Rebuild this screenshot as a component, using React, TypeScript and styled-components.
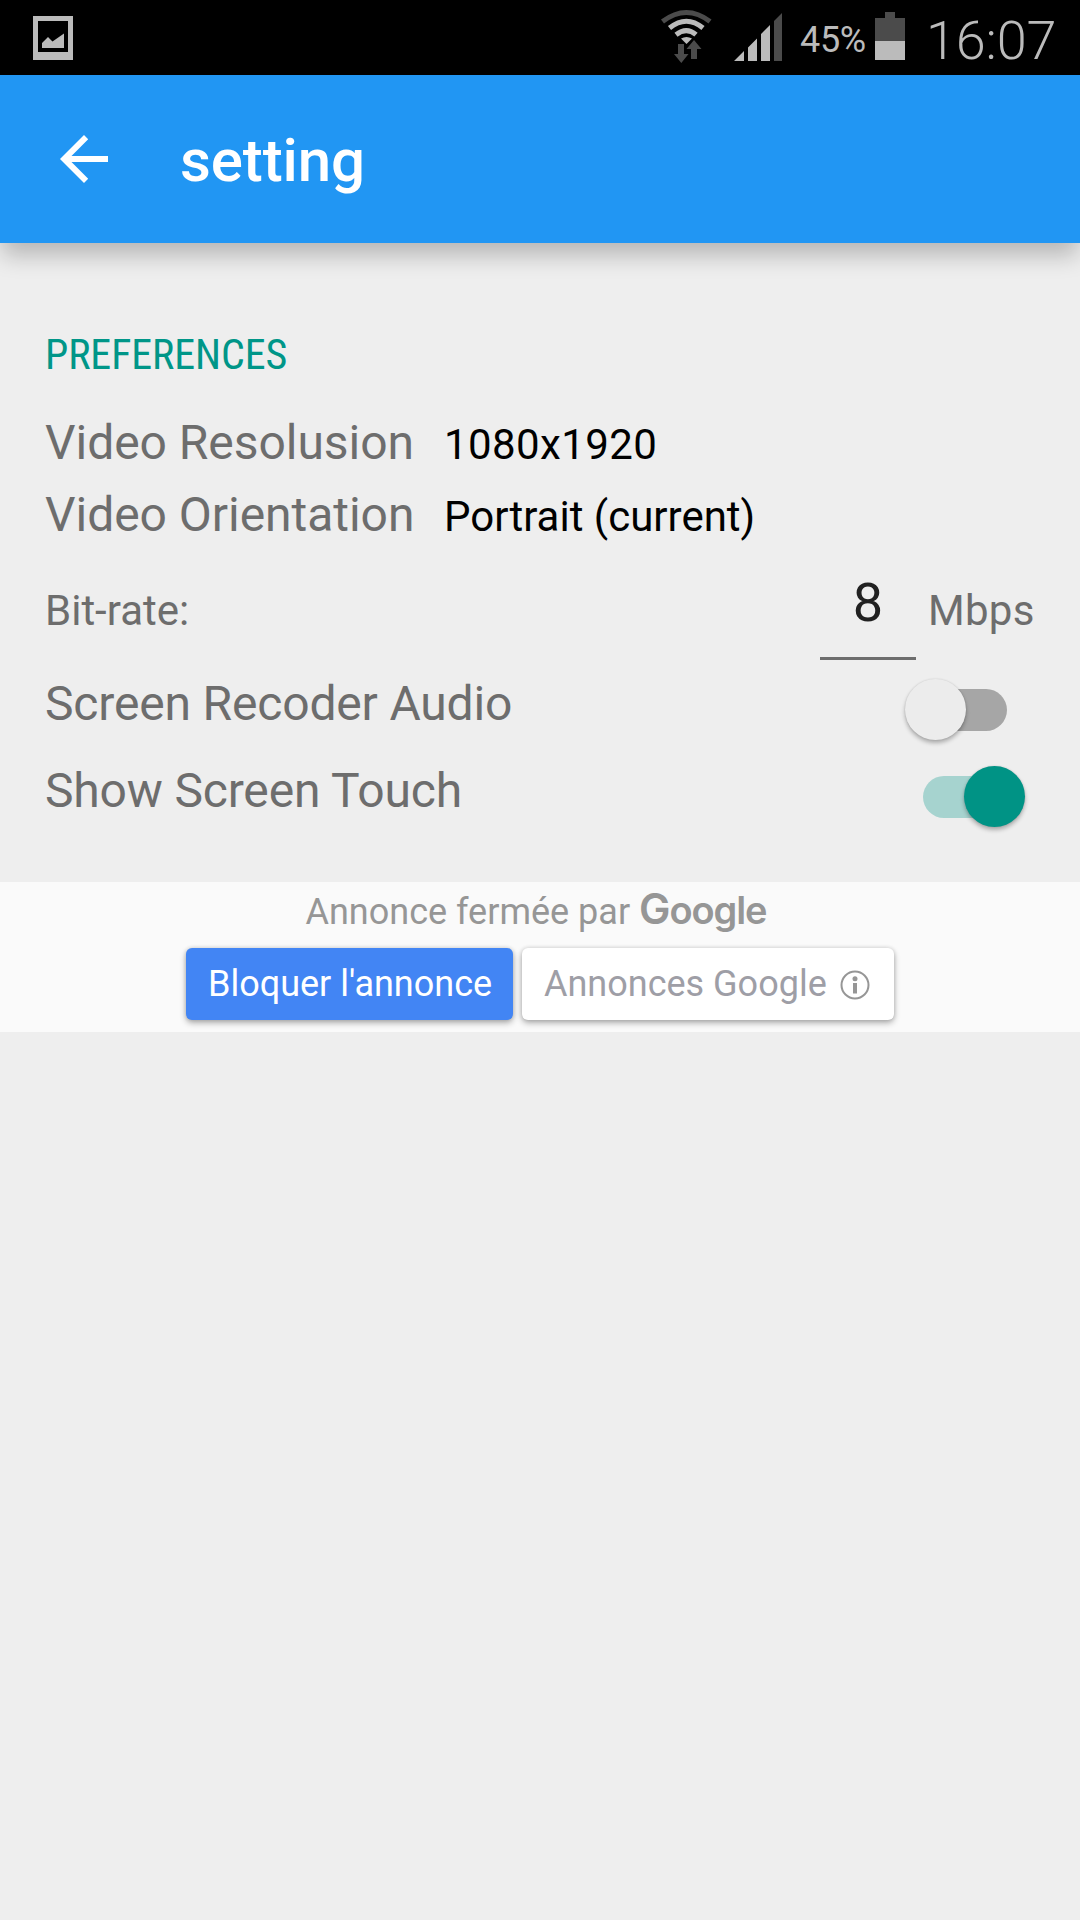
import React from "react";
import styled, { createGlobalStyle } from "styled-components";

const GlobalStyle = createGlobalStyle`
  body {
    margin: 0;
    background: #eeeeee;
    font-family: Roboto, "Noto Sans", sans-serif;
  }
`;

const Screen = styled.div`
  width: 1080px;
  height: 1920px;
  overflow: hidden;
  display: flex;
  flex-direction: column;
  background: #eeeeee;
  white-space: nowrap;
`;

const StatusBar = styled.header`
  display: flex;
  align-items: flex-start;
  height: 75px;
  flex: none;
  background: #000;
  color: #bbbbbb;
`;

const PictureIcon = styled.svg`
  margin: 16px auto 0 33px;
`;

const StatusIcons = styled.svg`
  margin-right: 14px;
`;

const BatteryText = styled.span`
  width: 74px;
  font-size: 36px;
  line-height: 80px;
  letter-spacing: -0.3px;
`;

const Clock = styled.span`
  width: 174px;
  padding-left: 20px;
  box-sizing: border-box;
  font-size: 54px;
  font-weight: 360;
  letter-spacing: -0.2px;
  line-height: 81px;
`;

const AppBar = styled.div`
  display: flex;
  align-items: center;
  height: 168px;
  flex: none;
  background: #2196f3;
  color: #fff;
  box-shadow: 0 14px 22px -2px rgba(0, 0, 0, 0.24);
`;

const BackIcon = styled.svg`
  margin: 0 72px 0 60px;
`;

const Title = styled.h1`
  margin: 0;
  padding-top: 3px;
  font-size: 60px;
  font-weight: 500;
  line-height: 70px;
  letter-spacing: -0.1px;
`;

const Preferences = styled.main`
  display: flex;
  flex-direction: column;
  padding: 87px 45px 48px;
  color: #6d6d6d;
`;

const SectionTitle = styled.h2`
  margin: 0 0 27px;
  color: #009688;
  font-family: "Roboto Condensed", Roboto, sans-serif;
  font-stretch: 75%;
  font-size: 42px;
  font-weight: 400;
  line-height: 50px;
  letter-spacing: -0.1px;
`;

const InfoRow = styled.div`
  display: flex;
  align-items: baseline;
  height: 72px;
  line-height: 72px;
`;

const Label = styled.span`
  font-size: 48px;
  letter-spacing: -0.17px;
`;

const InfoLabel = styled(Label)`
  width: 399px;
  letter-spacing: -0.04px;
`;

const Value = styled.span<{ $tracking?: string }>`
  color: #000;
  font-size: 42px;
  letter-spacing: ${(p) => p.$tracking ?? "normal"};
`;

const BitrateRow = styled.div`
  display: flex;
  height: 109px;
  font-size: 42px;
`;

const BitrateText = styled.span`
  padding-top: 5px;
  line-height: 109px;
`;

const BitrateUnit = styled(BitrateText)`
  width: 107px;
  letter-spacing: 0.3px;
`;

const BitrateField = styled.div`
  width: 96px;
  height: 106px;
  margin: 0 12px 0 auto;
  border-bottom: 3px solid #6d6d6d;
  color: #212121;
  font-size: 54px;
  line-height: 103px;
  text-align: center;
`;

const SwitchRow = styled.div`
  display: flex;
  justify-content: space-between;
  align-items: flex-start;
  height: 87px;
  line-height: 87px;
`;

const Track = styled.div<{ $on: boolean }>`
  position: relative;
  width: 84px;
  height: 42px;
  margin: 29px 28px 0 0;
  border-radius: 21px;
  background: ${(p) => (p.$on ? "#a6d3cf" : "#a6a6a6")};
`;

const Thumb = styled.div<{ $on: boolean }>`
  position: absolute;
  top: -10px;
  left: ${(p) => (p.$on ? "41px" : "-18px")};
  width: 61px;
  height: 61px;
  border-radius: 50%;
  background: ${(p) => (p.$on ? "#009385" : "#ececec")};
  box-shadow: 0 3px 4px rgba(0, 0, 0, 0.28), 0 0 2px rgba(0, 0, 0, 0.12);
`;

const AdPanel = styled.section`
  display: flex;
  flex-direction: column;
  align-items: center;
  height: 150px;
  background: #fafafa;
  font-size: 36px;
`;

const AdNotice = styled.div`
  display: flex;
  align-items: baseline;
  height: 66px;
  width: 469px;
  color: #969696;
  line-height: 54px;
`;

const Wordmark = styled.span`
  margin-left: 9px;
  font-family: Inter, sans-serif;
  font-size: 38px;
  font-weight: 600;
  letter-spacing: -1.1px;

  &::first-letter {
    font-size: 42px;
  }
`;

const AdActions = styled.div`
  display: flex;
  gap: 9px;
`;

const AdButton = styled.button<{ $primary?: boolean }>`
  display: flex;
  align-items: center;
  width: ${(p) => (p.$primary ? "327px" : "372px")};
  height: 72px;
  padding: 0 0 0 22px;
  border: 0;
  border-radius: 6px;
  background: ${(p) => (p.$primary ? "#4285f4" : "#ffffff")};
  color: ${(p) => (p.$primary ? "#ffffff" : "#9e9ea6")};
  box-shadow: 0 3px 6px rgba(0, 0, 0, 0.3), 0 0 4px rgba(0, 0, 0, 0.14);
  font: 400 36px/72px Roboto, sans-serif;
`;

const InfoIcon = styled.svg`
  margin-left: 13px;
  margin-top: 2px;
`;

function Switch({ on }: { on: boolean }) {
  return (
    <Track $on={on} role="switch" aria-checked={on}>
      <Thumb $on={on} />
    </Track>
  );
}

export default function App() {
  return (
    <Screen>
      <GlobalStyle />
      <StatusBar>
        <PictureIcon width="40" height="44" viewBox="0 0 40 44">
          <path d="M0 0h40v44H0zM5 5v31h30V5z" fill="#bbb" fillRule="evenodd" />
          <path d="M9 32v-5l6-6 4.500 4.500L31 17.500V32z" fill="#bbb" />
        </PictureIcon>
        <StatusIcons width="126" height="75" viewBox="660 0 126 75">
          <g fill="none" stroke="#bbb" strokeWidth="5">
            <path d="M662.500 21.500Q686.500 3.500 710 21.500" stroke="#4b4b4b" />
            <path d="M669.500 28Q686.500 14.500 703 28" />
            <path d="M676 34.700Q686.500 26.500 696 34.700" />
          </g>
          <path d="M681 38.500Q686.500 35.500 692 38.500L686.500 44z" fill="#bbb" />
          <path
            d="M678 44h6v10h4.500L681.300 63 674 54h4zM691 59h6V49h4.500L694 40l-7.500 9h4.500z"
            fill="#4b4b4b"
          />
          <path
            d="M734 61l10-10v10zM748 61V47.500l9-9V61zM761 61V34l9-9v36z"
            fill="#bbb"
          />
          <path d="M774 61V21l8-8v48z" fill="#4b4b4b" />
        </StatusIcons>
        <BatteryText>45%</BatteryText>
        <svg width="32" height="75" viewBox="874 0 32 75">
          <path d="M875 18h10v-6h10v6h10v23h-30z" fill="#4b4b4b" />
          <path d="M875 41h30v19h-30z" fill="#bbb" />
        </svg>
        <Clock>16:07</Clock>
      </StatusBar>
      <AppBar>
        <BackIcon width="48" height="48" viewBox="0 0 48 48">
          <path
            d="M48 21H11.500l16.700-16.800L24 0 0 24l24 24 4.200-4.200L11.500 27H48z"
            fill="#fff"
          />
        </BackIcon>
        <Title>setting</Title>
      </AppBar>
      <Preferences>
        <SectionTitle>PREFERENCES</SectionTitle>
        <InfoRow>
          <InfoLabel>Video Resolusion</InfoLabel>
          <Value $tracking="0.4px">1080x1920</Value>
        </InfoRow>
        <InfoRow>
          <InfoLabel>Video Orientation</InfoLabel>
          <Value>Portrait (current)</Value>
        </InfoRow>
        <BitrateRow>
          <BitrateText>Bit-rate:</BitrateText>
          <BitrateField>8</BitrateField>
          <BitrateUnit>Mbps</BitrateUnit>
        </BitrateRow>
        <SwitchRow>
          <Label>Screen Recoder Audio</Label>
          <Switch on={false} />
        </SwitchRow>
        <SwitchRow>
          <Label>Show Screen Touch</Label>
          <Switch on />
        </SwitchRow>
      </Preferences>
      <AdPanel>
        <AdNotice>
          Annonce fermée par <Wordmark>Google</Wordmark>
        </AdNotice>
        <AdActions>
          <AdButton $primary>Bloquer l'annonce</AdButton>
          <AdButton>
            Annonces Google
            <InfoIcon width="30" height="30" viewBox="0 0 30 30">
              <circle cx="15" cy="15" r="13.500" fill="none" stroke="#969696" strokeWidth="2" />
              <circle cx="15" cy="8.700" r="2.500" fill="#969696" />
              <path d="M13 13h4v10.500h-4z" fill="#969696" />
            </InfoIcon>
          </AdButton>
        </AdActions>
      </AdPanel>
    </Screen>
  );
}
